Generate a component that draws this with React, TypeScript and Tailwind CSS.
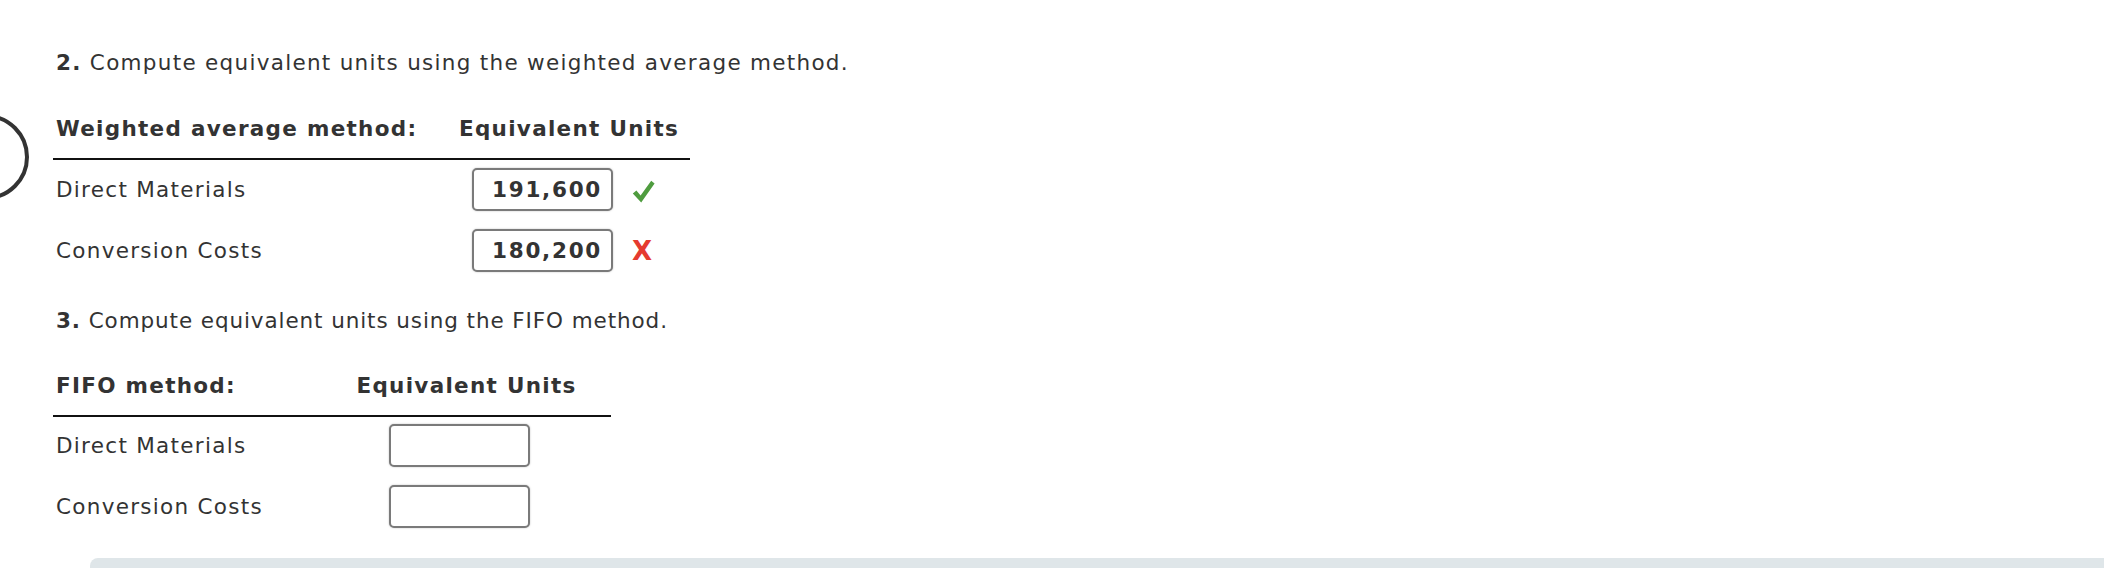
import type { JSX } from "react";

type Row = { label: string; value?: string; mark?: "ok" | "wrong" };

const weightedRows: Row[] = [
  { label: "Direct Materials", value: "191,600", mark: "ok" },
  { label: "Conversion Costs", value: "180,200", mark: "wrong" },
];

const fifoRows: Row[] = [
  { label: "Direct Materials" },
  { label: "Conversion Costs" },
];

function CheckMark() {
  return (
    <svg width="23" height="24" viewBox="0 0 23 24" className="block">
      <path
        d="M0.8 13.6 L4.4 10.4 L8.6 15.4 L19.2 0.8 L22.6 3.4 L9.2 22.6 Z"
        fill="#4f9c3f"
      />
    </svg>
  );
}

function Mark({ kind }: { kind?: "ok" | "wrong" }) {
  if (kind === "ok") {
    return (
      <span className="ml-[19px] flex h-[43px] w-[23px] items-center pt-[4px]">
        <CheckMark />
      </span>
    );
  }
  if (kind === "wrong") {
    return (
      <span className="ml-[19px] flex h-[43px] w-[23px] items-center text-[26px] leading-none font-bold tracking-normal text-[#e53b2f]">
        X
      </span>
    );
  }
  return null;
}

function AnswerBox({ value }: { value?: string }) {
  return (
    <div className="flex h-[43px] w-[141px] items-center justify-end rounded-[5px] border-2 border-[#7a7a7a] bg-white pr-[9px] font-bold tracking-[0.08em] text-[#333] shadow-[0_0_2px_rgba(0,0,0,0.25)]">
      {value ?? ""}
    </div>
  );
}

function EquivalentTable({
  title,
  width,
  col1,
  boxOffset,
  headerPad,
  rowTop,
  rows,
}: {
  title: string;
  width: string;
  col1: string;
  boxOffset: string;
  headerPad: string;
  rowTop: string;
  rows: Row[];
}): JSX.Element {
  return (
    <div className={width}>
      <div className={`flex border-b-2 border-[#111] font-bold ${headerPad}`}>
        <div className={`${col1} shrink-0 pl-[3px] whitespace-nowrap`}>{title}</div>
        <div className="flex-1 text-center whitespace-nowrap">Equivalent Units</div>
      </div>
      <div className={`flex flex-col gap-[18px] ${rowTop}`}>
        {rows.map((row) => (
          <div key={row.label} className="flex items-center">
            <div className={`${col1} shrink-0 pl-[3px]`}>{row.label}</div>
            <div className={`flex items-center ${boxOffset}`}>
              <AnswerBox value={row.value} />
              <Mark kind={row.mark} />
            </div>
          </div>
        ))}
      </div>
    </div>
  );
}

export default function App() {
  return (
    <div className="relative h-[568px] w-[2104px] overflow-hidden bg-white font-['DejaVu_Sans',Verdana,sans-serif] text-[21.5px] leading-[26px] tracking-[0.06em] text-[#333]">
      <div className="absolute top-[114px] left-[-57px] h-[86px] w-[86px] rounded-full border-[4px] border-[#333]" />

      <div className="pt-[50px] pl-[53px]">
        <p className="pl-[3px]">
          <span className="font-bold">2.</span> Compute equivalent units using
          the weighted average method.
        </p>

        <div className="mt-[40px]">
          <EquivalentTable
            title="Weighted average method:"
            width="w-[637px]"
            col1="w-[395px]"
            boxOffset="pl-[24px]"
            headerPad="pb-[16px]"
            rowTop="pt-[8px]"
            rows={weightedRows}
          />
        </div>

        <p className="mt-[36px] pl-[3px] tracking-[0.042em]">
          <span className="font-bold">3.</span> Compute equivalent units using
          the FIFO method.
        </p>

        <div className="mt-[39px]">
          <EquivalentTable
            title="FIFO method:"
            width="w-[558px]"
            col1="w-[269px]"
            boxOffset="pl-[67px]"
            headerPad="pb-[16px]"
            rowTop="pt-[7px]"
            rows={fifoRows}
          />
        </div>
      </div>

      <div className="mt-[30px] ml-[90px] h-[20px] rounded-tl-[8px] bg-[#dfe6e9]" />
    </div>
  );
}
